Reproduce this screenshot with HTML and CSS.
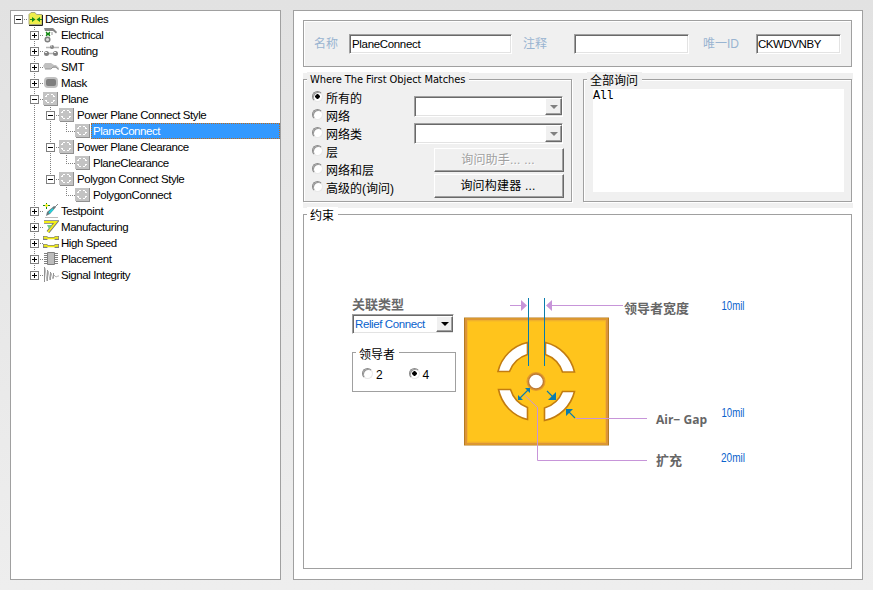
FILE: index.html
```html
<!DOCTYPE html>
<html lang="zh-CN">
<head>
<meta charset="utf-8">
<title>Design Rules</title>
<link rel="stylesheet" href="styles.css">
</head>
<body>
<svg class="defs" width="0" height="0">
  <symbol id="i-root" viewBox="0 0 16 16"><path d="M2 3.500l2-2h4l1.500 2H15v10H2z" fill="#eeee4a" stroke="#a9a97a"/><path d="M15.500 4v10.500H2" fill="none" stroke="#222"/><path d="M3 8.500h4M11 8.500h4" stroke="#178a17"/><path d="M5 6l3.500 2.500L5 11zM13 6L9.500 8.500l3.500 2.500z" fill="#178a17"/></symbol>
  <symbol id="i-elec" viewBox="0 0 16 16"><path d="M1 1h9l4 4-1 1.500-3-2.500H2z" fill="#858585"/><path d="M3 5l4 4M7 5L3 9M3 7h4" stroke="#178a17" stroke-width="1.200"/><circle cx="4.500" cy="12.500" r="2.300" fill="#ddd" stroke="#808080" stroke-width="1.500"/><path d="M9 5v3" stroke="#999"/></symbol>
  <symbol id="i-route" viewBox="0 0 16 16"><path d="M3 4.500h13M4 10.500h9" stroke="#b5b5b5" stroke-width="1.400"/><circle cx="9" cy="4" r="2" fill="#858585"/><circle cx="3.500" cy="10.500" r="2.500" fill="#808080"/><circle cx="12.500" cy="10.500" r="2.500" fill="#808080"/><path d="M2 9.500h2M11 9.500h2M8 3h1" stroke="#eee"/></symbol>
  <symbol id="i-smt" viewBox="0 0 16 16"><path d="M0 7l2-3h6l3 2h2l3 3v2h-1l-2-2H9l-2 1H2z" fill="#c0c0c0"/><path d="M2 10h6l2-2h3l2 2" fill="none" stroke="#959595"/></symbol>
  <symbol id="i-mask" viewBox="0 0 16 16"><rect x="1" y="2" width="14" height="11" rx="4" fill="#c0c0c0"/><rect x="3" y="4" width="10" height="7" rx="2" fill="#7e7e7e"/></symbol>
  <symbol id="i-plane" viewBox="0 0 16 16" shape-rendering="crispEdges"><path d="M0 1h14v13H0z" fill="#c3c3c3"/><path d="M14 1h1v14H1v-1h13z" fill="#909090"/><path d="M4 3h2v1H4zM3 4h1v2H3zM2 5h1v1H2zM8 3h2v1H8zM10 4h1v2h-1zM11 5h1v1h-1zM2 9h1v1H2zM3 9h1v2H3zM4 11h2v1H4zM11 9h1v1h-1zM10 9h1v2h-1zM8 11h2v1H8z" fill="#fff"/></symbol>
  <symbol id="i-test" viewBox="0 0 16 16"><path d="M2 14.500h13" stroke="#bbb"/><path d="M3 13l1-4 7-6 2 1-6 7z" fill="#66797e"/><path d="M6 10l4-4" stroke="#25d3dc" stroke-width="1.800"/><path d="M3.500 0v6M0 2.500h7" stroke="#178a17"/><path d="M3.500 1v3M2 2.500h3" stroke="#f6ee18" stroke-width="1.300"/><path d="M12 4l3-3" stroke="#888"/></symbol>
  <symbol id="i-manu" viewBox="0 0 16 16"><path d="M1 3h12L5 13" fill="none" stroke="#777" stroke-width="3.600"/><path d="M1 3h12L5 13" fill="none" stroke="#f2ed18" stroke-width="1.900"/><path d="M4 6h5l-3 4z" fill="#72c883"/></symbol>
  <symbol id="i-speed" viewBox="0 0 16 16"><g fill="#808080"><path d="M0 1h4l1 1h6l1-1h4v4h-4l-1-1H5L4 5H0zM0 9h4l1 1h6l1-1h4v4h-4l-1-1H5l-1 1H0z"/></g><path d="M1 2h3v1h8V2h3v1.500h-3v.5H4v-.5H1zM1 10h3v1h8v-1h3v1.500h-3v.5H4v-.5H1z" fill="#f2ed18" stroke="#f2ed18" stroke-width=".6"/></symbol>
  <symbol id="i-place" viewBox="0 0 16 16"><path d="M1 2.500h14M1 4.500h14M1 6.500h14M1 8.500h14M1 10.500h14M1 12.500h14" stroke="#808080"/><path d="M4.500 1.500h7v12h-7z" fill="#bcbcbc" stroke="#808080"/></symbol>
  <symbol id="i-signal" viewBox="0 0 16 16"><path d="M1.500 0v15M4.500 3v11M7.500 5v8M10.500 6v5" stroke="#929292"/><path d="M2 1l2 13 1-10 2 9 1-7 2 6 1-4 2 2 2-1h1" fill="none" stroke="#a5a5a5" stroke-width=".8"/></symbol>
</svg>
<main class="window">
  <nav class="panel tree">
    <div class="row"><i class="cell box minus first"></i><svg class="ico"><use href="#i-root"/></svg><span>Design Rules</span></div>
    <div class="row"><i class="cell"></i><i class="cell box plus line"></i><svg class="ico"><use href="#i-elec"/></svg><span>Electrical</span></div>
    <div class="row"><i class="cell"></i><i class="cell box plus line"></i><svg class="ico"><use href="#i-route"/></svg><span>Routing</span></div>
    <div class="row"><i class="cell"></i><i class="cell box plus line"></i><svg class="ico"><use href="#i-smt"/></svg><span>SMT</span></div>
    <div class="row"><i class="cell"></i><i class="cell box plus line"></i><svg class="ico"><use href="#i-mask"/></svg><span>Mask</span></div>
    <div class="row"><i class="cell"></i><i class="cell box minus line"></i><svg class="ico"><use href="#i-plane"/></svg><span>Plane</span></div>
    <div class="row"><i class="cell"></i><i class="cell line"></i><i class="cell box minus line"></i><svg class="ico"><use href="#i-plane"/></svg><span>Power Plane Connect Style</span></div>
    <div class="row"><i class="cell"></i><i class="cell line"></i><i class="cell line"></i><i class="cell elbow"></i><svg class="ico"><use href="#i-plane"/></svg><span class="selected">PlaneConnect</span></div>
    <div class="row"><i class="cell"></i><i class="cell line"></i><i class="cell box minus line"></i><svg class="ico"><use href="#i-plane"/></svg><span>Power Plane Clearance</span></div>
    <div class="row"><i class="cell"></i><i class="cell line"></i><i class="cell line"></i><i class="cell elbow"></i><svg class="ico"><use href="#i-plane"/></svg><span>PlaneClearance</span></div>
    <div class="row"><i class="cell"></i><i class="cell line"></i><i class="cell box minus line last"></i><svg class="ico"><use href="#i-plane"/></svg><span>Polygon Connect Style</span></div>
    <div class="row"><i class="cell"></i><i class="cell line"></i><i class="cell"></i><i class="cell elbow"></i><svg class="ico"><use href="#i-plane"/></svg><span>PolygonConnect</span></div>
    <div class="row"><i class="cell"></i><i class="cell box plus line"></i><svg class="ico"><use href="#i-test"/></svg><span>Testpoint</span></div>
    <div class="row"><i class="cell"></i><i class="cell box plus line"></i><svg class="ico"><use href="#i-manu"/></svg><span>Manufacturing</span></div>
    <div class="row"><i class="cell"></i><i class="cell box plus line"></i><svg class="ico"><use href="#i-speed"/></svg><span>High Speed</span></div>
    <div class="row"><i class="cell"></i><i class="cell box plus line"></i><svg class="ico"><use href="#i-place"/></svg><span>Placement</span></div>
    <div class="row"><i class="cell"></i><i class="cell box plus line last"></i><svg class="ico"><use href="#i-signal"/></svg><span>Signal Integrity</span></div>
  </nav>

  <section class="panel editor">
    <header class="frame identity">
      <label class="l-name">名称</label><div class="sunken f-name">PlaneConnect</div>
      <label class="l-note">注释</label><div class="sunken f-note"></div>
      <label class="l-id">唯一<b>ID</b></label><div class="sunken f-id">CKWDVNBY</div>
    </header>

    <div class="scope">
      <div class="frame match">
        <h2 class="latin">Where The First Object Matches</h2>
        <div class="radios">
          <label><i class="radio on"></i>所有的</label>
          <label><i class="radio"></i>网络</label>
          <label><i class="radio"></i>网络类</label>
          <label><i class="radio"></i>层</label>
          <label><i class="radio"></i>网络和层</label>
          <label><i class="radio"></i>高级的(询问)</label>
        </div>
        <div class="pickers">
          <div class="sunken combo disabled"><i class="drop"></i></div>
          <div class="sunken combo disabled"><i class="drop"></i></div>
          <div class="button off">询问助手... ...</div>
          <div class="button">询问构建器 ...</div>
        </div>
      </div>
      <div class="frame query">
        <h2>全部询问</h2>
        <div class="text">All</div>
      </div>
    </div>

    <div class="frame constraints">
      <h2>约束</h2>
      <div class="options">
        <strong>关联类型</strong>
        <div class="sunken combo style"><span>Relief Connect</span><i class="drop"></i></div>
        <div class="frame conductors">
          <h2>领导者</h2>
          <label><i class="radio"></i>2</label>
          <label><i class="radio on"></i>4</label>
        </div>
      </div>
      <svg class="diagram" width="300" height="190" viewBox="460 285 300 190">
        <rect x="464.500" y="318" width="144" height="127" fill="#ffc41c" stroke="#b57a22"/>
        <rect x="466" y="319.500" width="141" height="124" fill="none" stroke="#dc9438" stroke-width="2"/>
        <rect x="467.500" y="321" width="138" height="121" fill="none" stroke="#f4b52a"/>
        <g fill="#fff" stroke="#c27c10" stroke-width="1.600">
          <path d="M527.500 342.500A39 39 0 0 0 498 371.500H509.500A28 28 0 0 1 527.500 354.500Z"/>
          <path d="M545.500 342.500A39 39 0 0 1 574.500 372H562.500A28 28 0 0 0 545.500 354.500Z"/>
          <path d="M498.500 389.500H510.500A28 28 0 0 0 527.500 407.500V419.500A39 39 0 0 1 498.500 389.500Z"/>
          <path d="M574.500 391.500H562.500A28 28 0 0 1 544.500 408V420.500A39 39 0 0 0 574.500 391.500Z"/>
        </g>
        <circle cx="536" cy="381.500" r="8.500" fill="none" stroke="#e3992b" stroke-width="2"/>
        <circle cx="536" cy="381.500" r="7.500" fill="#fff" stroke="#bd7b35" stroke-width="1.400"/>
        <path d="M528.500 298V366M544.500 298V366" stroke="#087cae" shape-rendering="crispEdges"/>
        <g stroke="#c795d9" fill="none">
          <path d="M510 305.500H522M551 305.500H623M576 418.500H647"/>
          <path d="M525 395.500L537.500 407.500V460.500H647"/>
        </g>
        <path d="M521 300v11l6-5.500zM552 300v11l-6-5.500z" fill="#c795d9"/>
        <g stroke="#087cae" stroke-width="1.100"><path d="M519 399L529 389M547 391L554 398M575 418L568 411"/></g>
        <path d="M518 395v5h5zM525 388h5v5zM556 392v8h-8zM566 409h7l-7 7z" fill="#087cae"/>
        <g class="captions">
          <text x="624" y="313" textLength="65" lengthAdjust="spacingAndGlyphs">领导者宽度</text>
          <text x="656" y="424" textLength="51" lengthAdjust="spacingAndGlyphs" class="gap">Air− Gap</text>
          <text x="656" y="465" textLength="26" lengthAdjust="spacingAndGlyphs">扩充</text>
        </g>
        <g class="values">
          <text x="721.500" y="310" textLength="23" lengthAdjust="spacingAndGlyphs">10mil</text>
          <text x="721.500" y="417" textLength="23" lengthAdjust="spacingAndGlyphs">10mil</text>
          <text x="721" y="462" textLength="24" lengthAdjust="spacingAndGlyphs">20mil</text>
        </g>
      </svg>
    </div>
  </section>
</main>
</body>
</html>
```
FILE: styles.css
```css
*, *::before, *::after { box-sizing: border-box; }
body {
  margin: 0;
  height: 590px;
  overflow: hidden;
  background: linear-gradient(#e2e2e2, #eee);
  font: 12px/16px "Liberation Sans", "Noto Sans CJK SC", sans-serif;
  color: #000;
}
.defs { position: absolute; }
.window {
  display: flex;
  gap: 12px;
  height: 590px;
  padding: 10px 10px 10px;
}
.panel { background: #fff; border: 1px solid #a0a0a0; height: 570px; }
.tree { width: 271px; }
.editor { width: 570px; padding: 9px; }

.row { display: flex; height: 16px; margin-left: -1px; font-size: 11.5px; letter-spacing: -0.43px; white-space: nowrap; }
.cell { position: relative; width: 16px; height: 16px; flex: none; }
.cell.line { background: repeating-linear-gradient(#808080 0 1px, transparent 1px 2px) 8px 0 / 1px 16px no-repeat; }
.cell.line.last { background-size: 1px 8px; }
.cell.elbow { background: repeating-linear-gradient(#808080 0 1px, transparent 1px 2px) 8px 0 / 1px 9px no-repeat; }
.cell.box::before, .cell.elbow::before {
  content: "";
  position: absolute;
  left: 8px;
  top: 8px;
  width: 9px;
  height: 1px;
  background: repeating-linear-gradient(90deg, #808080 0 1px, transparent 1px 2px);
}
.cell.box::after {
  content: "";
  position: absolute;
  left: 4px;
  top: 4px;
  width: 9px;
  height: 9px;
  border: 1px solid #808080;
  background: linear-gradient(#000, #000) 1px 3px / 5px 1px no-repeat, #fff;
}
.cell.plus::after {
  background: linear-gradient(#000, #000) 1px 3px / 5px 1px no-repeat, linear-gradient(#000, #000) 3px 1px / 1px 5px no-repeat, #fff;
}
.ico { width: 16px; height: 16px; margin-left: 1px; flex: none; }
.row span { padding-left: 2px; flex: 1; }
.row .selected {
  background: #3399ff;
  color: #fff;
  line-height: 14px;
  padding-left: 1px;
  border: 1px dotted #c06a18;
}

.frame {
  position: relative;
  border: 1px solid #a0a0a0;
  box-shadow: inset 1px 1px #fff, 1px 1px #fff;
}
.frame h2 {
  position: absolute;
  left: 3px;
  top: -8px;
  margin: 0;
  padding: 0 4px 0 3px;
  background: #f0f0f0;
  font: 12px/16px "Noto Sans CJK SC", sans-serif;
  white-space: nowrap;
}
.frame h2.latin { font-family: "DejaVu Sans Condensed", "DejaVu Sans", sans-serif; font-size: 11px; letter-spacing: -0.07px; }

.sunken {
  background: #fff;
  border: 1px solid;
  border-color: #a0a0a0 #fff #fff #a0a0a0;
  box-shadow: inset 1px 1px #696969, inset -1px -1px #e3e3e3;
}
.identity {
  display: flex;
  align-items: flex-start;
  width: 549px;
  height: 47px;
  padding: 13px 0 0 10px;
  background: #f0f0f0;
}
.identity label { color: #99b4d1; line-height: 20px; }
.identity b { font-weight: 400; }
.identity .sunken { height: 20px; padding-left: 2px; font-size: 11.5px; line-height: 18px; letter-spacing: -0.33px; }
.l-name { width: 35px; }
.f-name { width: 163px; }
.l-note { width: 51px; margin-left: 11px; }
.f-note { width: 115px; }
.l-id { width: 53px; margin-left: 14px; }
.identity .f-id { width: 85px; padding-left: 1px; letter-spacing: -0.45px; }

.scope {
  display: flex;
  gap: 11px;
  height: 135px;
  margin-top: 6px;
  padding-top: 6px;
  background: #f0f0f0;
}
.match { display: flex; width: 269px; height: 123px; }
.radios { width: 110px; padding: 11px 0 0 8px; }
.radios label { display: flex; height: 18px; line-height: 17px; white-space: nowrap; }
.radio {
  width: 11px;
  height: 11px;
  margin-right: 3px;
  flex: none;
  border: 1px solid;
  border-color: #8a8a8a #e8e8e8 #e8e8e8 #8a8a8a;
  border-radius: 50%;
  background: #fff;
  box-shadow: inset 1px 1px #9a9a9a;
}
.radio.on { background: radial-gradient(circle at 4.500px 4.500px, #000 2px, #fff 2.500px); }
.pickers { padding-top: 16px; width: 152px; }
.combo { display: flex; justify-content: flex-end; width: 149px; height: 21px; margin-bottom: 6px; padding: 1px 0; }
.drop {
  display: flex;
  align-items: center;
  justify-content: center;
  width: 17px;
  background: #f0f0f0;
  border: 1px solid;
  border-color: #fff #696969 #696969 #fff;
  box-shadow: inset -1px -1px #a0a0a0;
}
.drop::before { content: ""; border: 4px solid transparent; border-top-color: #000; border-bottom: 0; }
.disabled .drop::before { border-top-color: #808080; }
.button {
  width: 130px;
  height: 24px;
  margin: 0 0 2px 20px;
  background: #f0f0f0;
  border: 1px solid;
  border-color: #fff #696969 #696969 #fff;
  box-shadow: inset -1px -1px #a0a0a0;
  text-align: center;
  line-height: 22px;
  letter-spacing: 0.2px;
  padding-right: 2px;
}
.combo + .button { margin-top: -2px; }
.button.off { color: #a0a0a0; text-shadow: 1px 1px #fff; }
.query { width: 269px; height: 123px; padding: 9px 7px 0 9px; }
.text {
  height: 103px;
  background: #fff;
  font: 12px/14px "Liberation Mono", monospace;
  letter-spacing: -0.6px;
}

.constraints { display: flex; width: 549px; height: 355px; margin-top: 6px; }
.constraints h2 { background: #fff; }
.options { width: 104px; margin: 82px 0 0 48px; }
.options strong { display: block; height: 17px; font-size: 13px; line-height: 16px; color: #696969; }
.style { width: 102px; height: 20px; margin: 0 0 18px; color: #0a62cc; line-height: 16px; }
.style span { flex: 1; padding-left: 2px; white-space: nowrap; font-size: 11.5px; letter-spacing: -0.4px; }
.conductors { display: flex; height: 40px; padding: 15px 0 0 9px; box-shadow: none; }
.conductors .radio { margin-right: 3px; }
.conductors h2 { top: -7px; }
.conductors label { display: flex; width: 47px; line-height: 14px; }
.diagram { display: block; margin: 70px 0 0 4px; }
.captions { font: bold 13px "Noto Sans CJK SC", sans-serif; fill: #666; }
.captions .gap { font-family: "Open Sans", sans-serif; font-size: 12px; }
.values { font: 12px "Liberation Sans", sans-serif; fill: #0a62cc; }
```
